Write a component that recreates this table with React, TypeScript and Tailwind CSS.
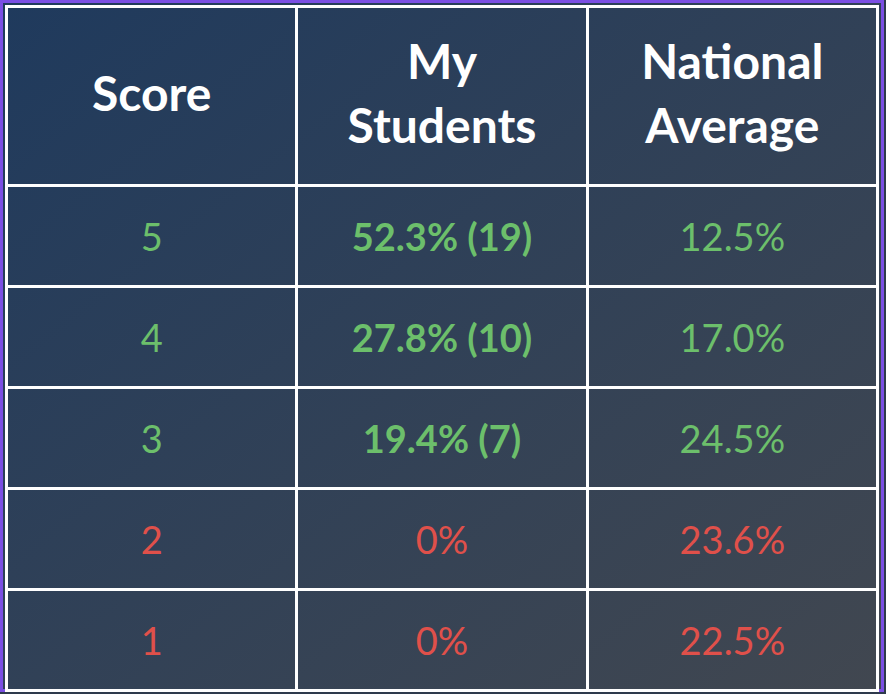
const rows = [
    { score: '5', mine: '52.3% (19)', national: '12.5%', good: true },
    { score: '4', mine: '27.8% (10)', national: '17.0%', good: true },
    { score: '3', mine: '19.4% (7)', national: '24.5%', good: true },
    { score: '2', mine: '0%', national: '23.6%', good: false },
    { score: '1', mine: '0%', national: '22.5%', good: false },
];

export default function App() {
    return (
        <div className="w-[886px] h-[694px] bg-[#2e3a4c]" style={{ fontFamily: 'Lato, "Open Sans", sans-serif' }}>
            <div className="w-[884px] h-[692px] border-[3px] border-[#7b4fe3] p-[2px] bg-gradient-to-br from-[#1f3a5d] to-[#414750]">
                <table className="w-full h-full border-collapse border-2 border-white table-fixed">
                    <thead>
                        <tr className="h-[179px]">
                            <th className="border-[3px] border-white text-white text-[48px] font-bold leading-[64px] pb-[6px]">Score</th>
                            <th className="border-[3px] border-white text-white text-[48px] font-bold leading-[64px] pb-[6px]">
                                My
                                <br />
                                Students
                            </th>
                            <th className="border-[3px] border-white text-white text-[48px] font-bold leading-[64px] pb-[6px]">
                                National
                                <br />
                                Average
                            </th>
                        </tr>
                    </thead>
                    <tbody>
                        {rows.map((r) => {
                            const color = r.good ? 'text-[#6cbf6b]' : 'text-[#e0504a]';
                            return (
                                <tr key={r.score} className="h-[101px]">
                                    <td className={`border-[3px] border-white text-center text-[38px] ${color}`}>{r.score}</td>
                                    <td className={`border-[3px] border-white text-center text-[38px] ${color} ${r.good ? 'font-bold' : ''}`}>
                                        {r.mine}
                                    </td>
                                    <td className={`border-[3px] border-white text-center text-[38px] ${color}`}>{r.national}</td>
                                </tr>
                            );
                        })}
                    </tbody>
                </table>
            </div>
        </div>
    );
}
